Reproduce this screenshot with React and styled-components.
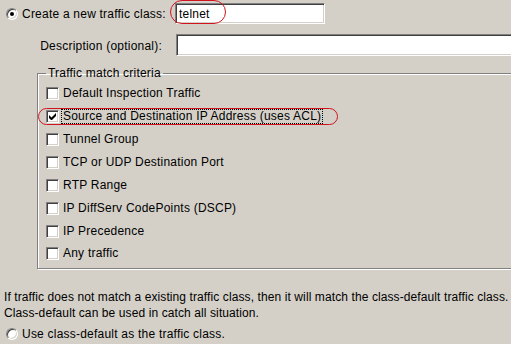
import React from 'react';
import styled, { createGlobalStyle } from 'styled-components';

const GlobalStyle = createGlobalStyle`
  html, body {
    margin: 0;
    padding: 0;
    background: #d4d0c8;
    overflow: hidden;
  }
  body {
    font-family: "Liberation Sans", Arial, sans-serif;
    font-size: 12px;
    letter-spacing: 0.22px;
    color: #000;
  }
`;

const Page = styled.div`
  width: 511px;
  height: 344px;
  overflow: hidden;
  padding-top: 3px;
  box-sizing: border-box;
`;

const FormGrid = styled.div`
  display: grid;
  grid-template-columns: 162px 340px;
  column-gap: 13px;
  row-gap: 10px;
  align-items: center;
`;

const LabelCell = styled.div`
  display: flex;
  align-items: center;
  justify-content: ${p => (p.$spread ? 'space-between' : 'flex-end')};
  padding-left: ${p => (p.$spread ? '6px' : '0')};
  padding-top: ${p => (p.$spread ? '0' : '1px')};
  white-space: nowrap;
`;

const Radio = styled.span`
  position: relative;
  display: inline-block;
  width: 12px;
  height: 12px;
  box-sizing: border-box;
  border-radius: 50%;
  background: #fff;
  border: 1px solid;
  border-color: #808080 #fff #fff #808080;
  box-shadow: inset 1px 1px 0 #404040, inset -1px -1px 0 #d4d0c8;
  margin-right: 4px;
  flex: none;
  &::after {
    content: '';
    display: ${p => (p.$checked ? 'block' : 'none')};
    position: absolute;
    left: 3px;
    top: 3px;
    width: 4px;
    height: 4px;
    border-radius: 50%;
    background: #000;
  }
`;

const InputWrap = styled.div`
  position: relative;
  display: flex;
`;

const TextBox = styled.div`
  box-sizing: border-box;
  width: ${p => p.$width}px;
  height: ${p => p.$height}px;
  margin-left: ${p => p.$offset || 0}px;
  background: #fff;
  border: 1px solid;
  border-color: #808080 #fff #fff #808080;
  box-shadow: inset 1px 1px 0 #404040, inset -1px -1px 0 #d4d0c8;
  padding: 0 3px;
  display: flex;
  align-items: center;
`;

const Highlight = styled.span`
  position: absolute;
  left: ${p => p.$left}px;
  top: ${p => p.$top}px;
  width: ${p => p.$width}px;
  height: ${p => p.$height}px;
  box-sizing: border-box;
  border: 1px solid #d0141e;
  border-radius: ${p => p.$height / 2}px;
  pointer-events: none;
`;

const GroupBox = styled.fieldset`
  margin: 10px 0 0 37px;
  width: 520px;
  box-sizing: border-box;
  border: 1px solid #808080;
  box-shadow: inset 1px 1px 0 #fff, 1px 1px 0 #fff;
  padding: 2px 0 5px 8px;
  min-width: 0;
`;

const Legend = styled.legend`
  padding: 0 2px;
  line-height: 14px;
`;

const CriteriaRow = styled.div`
  position: relative;
  display: flex;
  align-items: center;
  height: ${p => (p.$short ? 20 : 23)}px;
  white-space: nowrap;
`;

const CheckBox = styled.span`
  display: inline-flex;
  align-items: center;
  justify-content: center;
  width: 13px;
  height: 13px;
  box-sizing: border-box;
  background: #fff;
  border: 1px solid;
  border-color: #808080 #fff #fff #808080;
  box-shadow: inset 1px 1px 0 #404040, inset -1px -1px 0 #d4d0c8;
  margin-right: 3px;
  flex: none;
`;

const RowLabel = styled.span`
  padding: 0 1px;
  outline: ${p => (p.$focused ? '1px dotted #000' : 'none')};
  line-height: 13px;
`;

const Note = styled.p`
  margin: 20px 0 0 4px;
  line-height: 16px;
  letter-spacing: 0.1px;
  white-space: nowrap;
`;

const OptionRow = styled.div`
  display: flex;
  align-items: center;
  height: 20px;
  margin-top: 3px;
  padding-left: 6px;
`;

const Check = () => (
  <svg width="7" height="7" viewBox="0 0 7 7">
    <path d="M0 2v3l2 2h1l4-4V0L2.5 4.5z" fill="#000" />
  </svg>
);

const criteria = [
  { label: 'Default Inspection Traffic' },
  { label: 'Source and Destination IP Address (uses ACL)', checked: true },
  { label: 'Tunnel Group' },
  { label: 'TCP or UDP Destination Port' },
  { label: 'RTP Range' },
  { label: 'IP DiffServ CodePoints (DSCP)' },
  { label: 'IP Precedence' },
  { label: 'Any traffic', short: true },
];

export default function App() {
  return (
    <Page>
      <GlobalStyle />
      <FormGrid>
        <LabelCell $spread>
          <Radio $checked />
          <span>Create a new traffic class:</span>
        </LabelCell>
        <InputWrap>
          <TextBox $width={150} $height={21}>telnet</TextBox>
          <Highlight $left={-5} $top={-3} $width={56} $height={24} />
        </InputWrap>
        <LabelCell>Description (optional):</LabelCell>
        <InputWrap>
          <TextBox $width={340} $height={22} $offset={1} />
        </InputWrap>
      </FormGrid>

      <GroupBox>
        <Legend>Traffic match criteria</Legend>
        {criteria.map(c => (
          <CriteriaRow key={c.label} $short={c.short}>
            <CheckBox>{c.checked && <Check />}</CheckBox>
            <RowLabel $focused={c.checked}>{c.label}</RowLabel>
            {c.checked && <Highlight $left={-8} $top={3} $width={300} $height={17} />}
          </CriteriaRow>
        ))}
      </GroupBox>

      <Note>
        If traffic does not match a existing traffic class, then it will match the class-default traffic class.
        <br />
        Class-default can be used in catch all situation.
      </Note>
      <OptionRow>
        <Radio />
        <span>Use class-default as the traffic class.</span>
      </OptionRow>
    </Page>
  );
}
